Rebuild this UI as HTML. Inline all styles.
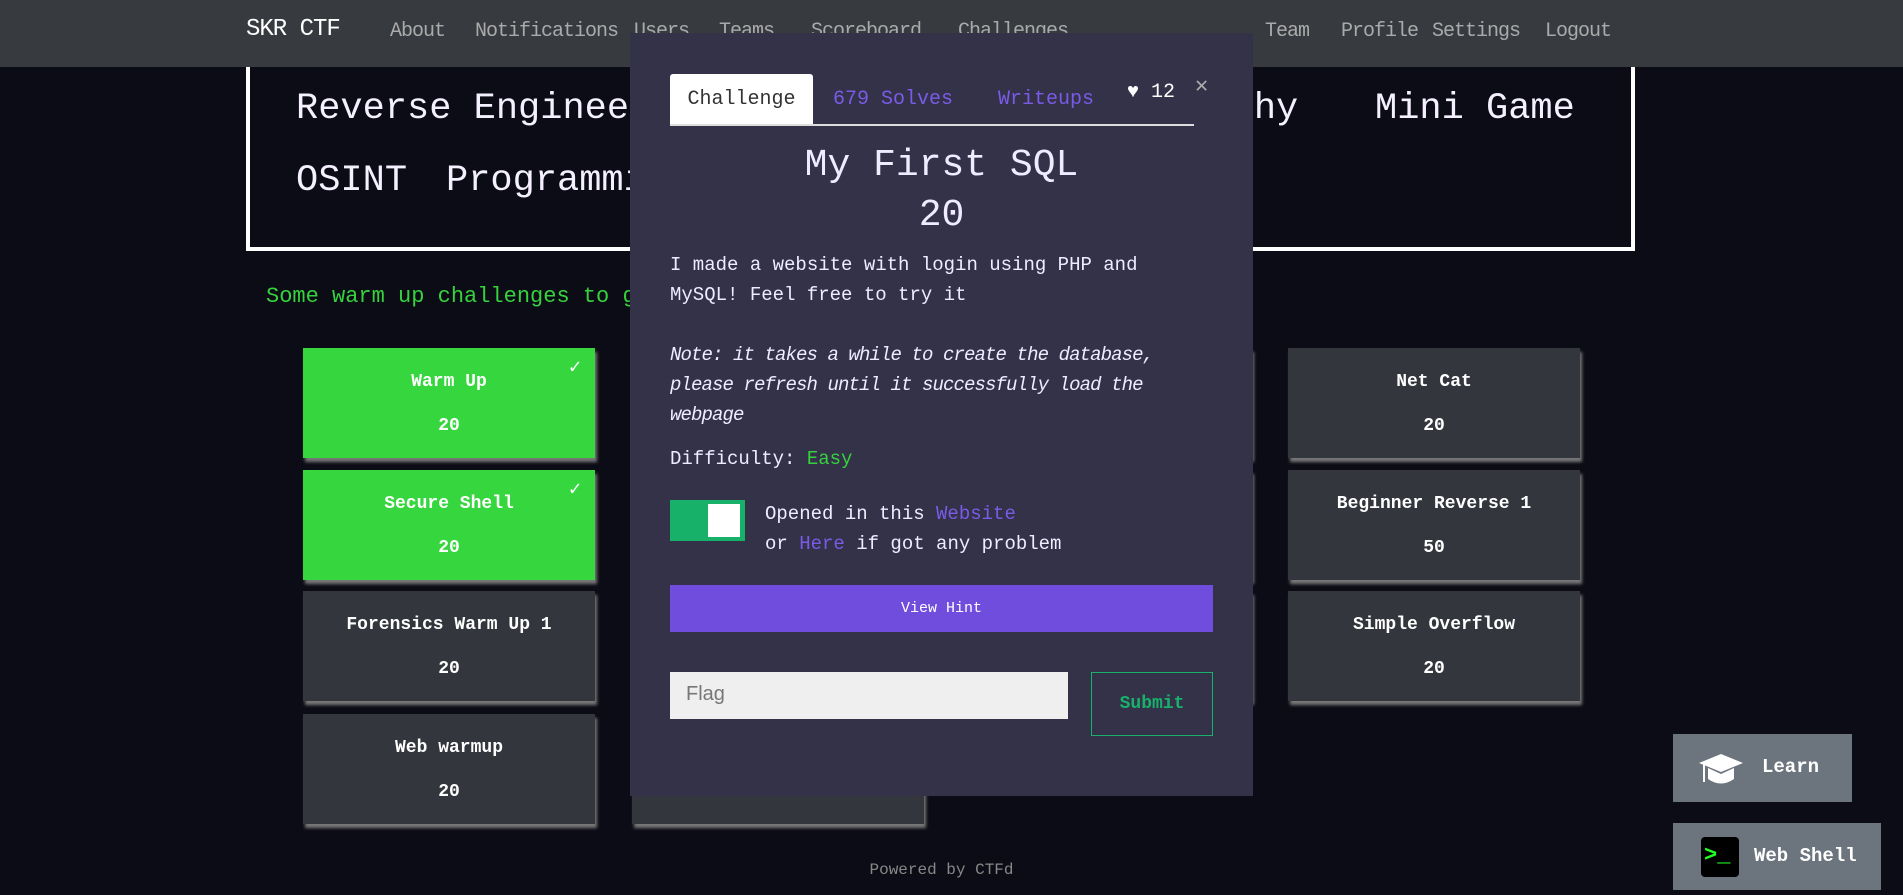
<!DOCTYPE html>
<html><head><meta charset="utf-8"><style>
*{box-sizing:border-box;margin:0;padding:0}
body{width:1903px;height:895px;overflow:hidden;background:#0c0c16;font-family:"Liberation Mono",monospace;color:#fff;position:relative}
.nav{position:absolute;left:0;top:0;width:1903px;height:67px;background:#373b40}
.nav span{position:absolute;top:20px;font-size:20px;color:#aaa;letter-spacing:-1px}
.brand{color:#fff!important;font-size:24px!important;top:16px!important}
.cat{position:absolute;left:246px;top:40px;width:1389px;height:211px;border:4px solid #fff;border-top:none}
.cat span{position:absolute;font-size:37px;color:#f4f0ff}
.green{position:absolute;left:266px;top:284px;font-size:22px;color:#36d23d}
.card{position:absolute;width:292px;height:110px;background:#33363c;box-shadow:2px 4px 3px #777;text-align:center;font-weight:bold;font-size:18px}
.card.g{background:#36d73e}
.card .t{position:absolute;top:24px;width:100%}
.card .p{position:absolute;top:68px;width:100%}
.card .c{position:absolute;right:14px;top:6px;font-size:20px}
.modal{position:absolute;left:630px;top:33px;width:623px;height:763px;background:#333249}
.m{position:absolute}
.purple{color:#7a5be6}
.btn{position:absolute;background:#6c757d;color:#fff;font-weight:bold;font-size:19px}
</style></head><body>
<div class="cat">
<span style="left:915px;top:48px">graphy</span>
<span style="left:46px;top:48px">Reverse Engineering</span>
<span style="left:1125px;top:48px">Mini Game</span>
<span style="left:46px;top:120px">OSINT</span>
<span style="left:196px;top:120px">Programming</span>
</div>
<div class="nav">
<span class="brand" style="left:246px">SKR CTF</span>
<span style="left:390px">About</span><span style="left:475px">Notifications</span><span style="left:634px">Users</span><span style="left:719px">Teams</span><span style="left:811px">Scoreboard</span><span style="left:958px">Challenges</span>
<span style="left:1265px">Team</span><span style="left:1341px">Profile</span><span style="left:1432px">Settings</span><span style="left:1545px">Logout</span>
</div>
<div class="green">Some warm up challenges to get started</div>

<div class="card g" style="left:303px;top:348px"><div class="t">Warm Up</div><div class="p">20</div><div class="c">✓</div></div>
<div class="card g" style="left:303px;top:470px"><div class="t">Secure Shell</div><div class="p">20</div><div class="c">✓</div></div>
<div class="card" style="left:303px;top:591px"><div class="t">Forensics Warm Up 1</div><div class="p">20</div></div>
<div class="card" style="left:303px;top:714px"><div class="t">Web warmup</div><div class="p">20</div></div>
<div class="card" style="left:632px;top:714px"><div class="t"></div><div class="p">20</div></div>
<div class="card" style="left:960px;top:348px"></div>
<div class="card" style="left:960px;top:470px"></div>
<div class="card" style="left:960px;top:591px"></div>
<div class="card" style="left:1288px;top:348px"><div class="t">Net Cat</div><div class="p">20</div></div>
<div class="card" style="left:1288px;top:470px"><div class="t">Beginner Reverse 1</div><div class="p">50</div></div>
<div class="card" style="left:1288px;top:591px"><div class="t">Simple Overflow</div><div class="p">20</div></div>

<div class="m" style="width:1903px;top:861px;text-align:center;left:-10px;font-size:16px;color:#888">Powered by CTFd</div>

<div class="btn" style="left:1673px;top:734px;width:179px;height:68px">
<svg style="position:absolute;left:26px;top:18px" width="44" height="36" viewBox="0 0 44 36"><path d="M22 2 L44 11 L22 20 L0 11Z" fill="#fff"/><path d="M9 16 V27 Q22 36 35 27 V16 L22 22Z" fill="#fff"/><rect x="4" y="12" width="2" height="18" fill="#fff"/></svg>
<span style="position:absolute;left:89px;top:22px">Learn</span></div>
<div class="btn" style="left:1673px;top:823px;width:208px;height:67px">
<div style="position:absolute;left:28px;top:14px;width:38px;height:40px;background:#000;border-radius:4px;color:#2f2;font-size:22px;padding:4px 3px;line-height:30px">&gt;_</div>
<span style="position:absolute;left:81px;top:22px">Web Shell</span></div>

<div class="modal">
<div class="m" style="left:40px;top:41px;width:143px;height:51px;background:#fff;color:#333;font-size:20px;text-align:center;line-height:52px;border-radius:3px 3px 0 0">Challenge</div>
<div class="m purple" style="left:203px;top:55px;font-size:20px">679 Solves</div>
<div class="m purple" style="left:368px;top:55px;font-size:20px">Writeups</div>
<div class="m" style="left:497px;top:48px;font-size:20px">♥ 12</div>
<div class="m" style="left:565px;top:40px;font-size:22px;color:#aaa">✕</div>
<div class="m" style="left:40px;top:91px;width:524px;height:2px;background:#ddd"></div>
<div class="m" style="left:0;width:623px;top:108px;text-align:center;font-size:38px;line-height:50px;color:#f0ecff">My First SQL<br>20</div>
<div class="m" style="left:40px;top:217px;width:560px;font-size:19px;line-height:30px;color:#f0ecff;white-space:nowrap">I made a website with login using PHP and<br>MySQL! Feel free to try it<br><br><i style="letter-spacing:-0.9px">Note: it takes a while to create the database,<br>please refresh until it successfully load the<br>webpage</i></div>
<div class="m" style="left:40px;top:415px;font-size:19px;color:#f0ecff">Difficulty: <span style="color:#36d23d">Easy</span></div>
<div class="m" style="left:40px;top:467px;width:75px;height:41px;background:#18b16a"><div style="position:absolute;left:38px;top:4px;width:32px;height:33px;background:#fff"></div></div>
<div class="m" style="left:135px;top:466px;font-size:19px;line-height:30px;color:#f0ecff">Opened in this <span class="purple">Website</span><br>or <span class="purple">Here</span> if got any problem</div>
<div class="m" style="left:40px;top:552px;width:543px;height:47px;background:#714ddd;color:#fff;text-align:center;line-height:47px;font-size:15px">View Hint</div>
<div class="m" style="left:40px;top:639px;width:398px;height:47px;background:#efefef;color:#777;font-family:'Liberation Sans',sans-serif;font-size:20px;padding:11px 16px">Flag</div>
<div class="m" style="left:461px;top:639px;width:122px;height:64px;border:1px solid #18b16a;color:#18b16a;font-weight:bold;font-size:18px;text-align:center;line-height:62px">Submit</div>
</div>
</body></html>
